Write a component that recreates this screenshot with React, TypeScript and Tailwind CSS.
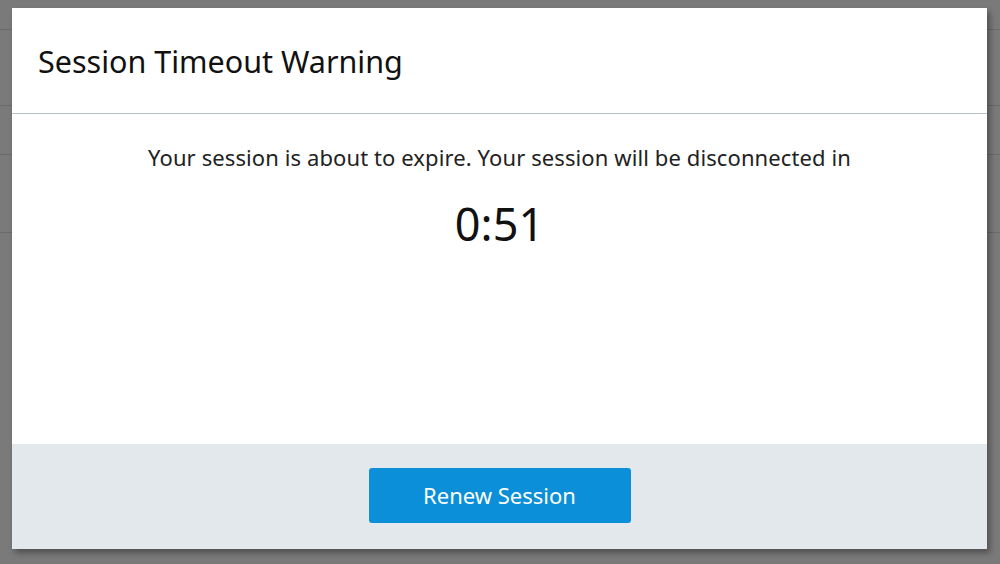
export default function App() {
    return (
        <div className="relative w-[1000px] h-[564px] bg-[#7a7a7a] overflow-hidden" style={{ fontFamily: '"Noto Sans", "Open Sans", sans-serif' }}>
            {/* page behind the overlay */}
            <div className="absolute inset-0 flex flex-col">
                <div className="h-[30px] border-b border-[#6a6a6a]" />
                <div className="h-[76px] border-b border-[#6a6a6a]" />
                <div className="h-[49px] border-b border-[#6a6a6a]" />
                <div className="h-[78px] border-b border-[#6a6a6a]" />
            </div>

            <div className="absolute left-[12px] top-[8px] w-[975px] h-[541px] bg-white flex flex-col shadow-[3px_4px_6px_rgba(0,0,0,0.35)]">
                <div className="h-[106px] flex items-center px-[26px] border-b border-[#b9c2ca]">
                    <h1 className="text-[30.5px] text-[#111] mt-[2px]">Session Timeout Warning</h1>
                </div>

                <div className="flex-1 flex flex-col items-center pt-[28px]">
                    <p className="text-[22px] leading-[30px] text-[#222] tracking-[0.1px]">Your session is about to expire. Your session will be disconnected in</p>
                    <p className="text-[45px] text-[#111] mt-[29px] leading-none">0:51</p>
                </div>

                <div className="h-[105px] bg-[#e2e8ec] flex justify-center pt-[24px]">
                    <button className="w-[262px] h-[55px] bg-[#0b8fd8] text-white text-[22px] rounded-[3px]">
                        Renew Session
                    </button>
                </div>
            </div>
        </div>
    );
}
